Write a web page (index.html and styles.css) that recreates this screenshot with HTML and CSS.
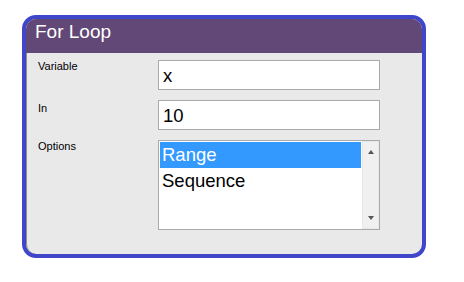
FILE: index.html
```html
<!DOCTYPE html>
<html>
<head>
<meta charset="utf-8">
<link rel="stylesheet" href="styles.css">
</head>
<body>
<div class="window">
  <div class="titlebar">For Loop</div>
  <div class="content">
    <div class="label">Variable</div>
    <div class="field">x</div>
    <div class="label label-in">In</div>
    <div class="field">10</div>
    <div class="label">Options</div>
    <div class="listbox">
      <div class="items">
        <div class="item selected">Range</div>
        <div class="item">Sequence</div>
      </div>
      <div class="scrollbar">
        <span class="arrow up"></span>
        <span class="arrow down"></span>
      </div>
    </div>
  </div>
</div>
</body>
</html>
```
FILE: styles.css
```css
html, body {
  margin: 0;
  padding: 0;
  background: #ffffff;
}
body {
  padding: 15px 0 0 22px;
  font-family: "Liberation Sans", Arial, sans-serif;
}
.window {
  position: relative;
  width: 396px;
  height: 235px;
  border: 4px solid #3f46c9;
  border-radius: 14px;
  background: #e9e9e9;
  display: flex;
  flex-direction: column;
}
.window::before {
  content: "";
  position: absolute;
  top: -4px;
  bottom: -4px;
  left: -1px;
  right: 0;
  border-left: 2px solid #707070;
  background: #d6d6d6;
  z-index: -1;
}
.titlebar {
  height: 34px;
  box-sizing: border-box;
  background: #614876;
  color: #ffffff;
  font-size: 19px;
  line-height: 22px;
  padding: 2px 0 0 9px;
  border-radius: 10px 10px 0 0;
}
.content {
  flex: 1;
  border-left: 1px solid #8c8c8c;
  border-bottom-left-radius: 10px;
  display: grid;
  grid-template-columns: 131px 222px;
  grid-auto-rows: auto;
  row-gap: 10px;
  padding: 7px 0 0 0;
  align-content: start;
}
.label {
  font-size: 11px;
  line-height: 13px;
  color: #000;
  padding: 0 0 0 11px;
}
.label-in {
  padding-top: 2px;
}
.field {
  height: 30px;
  box-sizing: border-box;
  border: 1px solid #aaaaaa;
  background: #ffffff;
  font-size: 18.5px;
  line-height: 26px;
  padding: 2px 4px 0 4px;
  color: #000;
}
.listbox {
  height: 90px;
  box-sizing: border-box;
  border: 1px solid #aaaaaa;
  background: #ffffff;
  display: flex;
}
.items {
  flex: 1;
  padding: 1px 1px 0 1px;
}
.item {
  height: 26px;
  font-size: 18.5px;
  line-height: 26px;
  padding-left: 2px;
  color: #000;
}
.item.selected {
  background: #3399ff;
  color: #ffffff;
}
.scrollbar {
  width: 17px;
  box-sizing: border-box;
  background: #f0f0f0;
  border: 1px solid #e8e8e8;
  display: flex;
  flex-direction: column;
  justify-content: space-between;
  align-items: center;
  padding: 8px 0 8px 0;
}
.arrow {
  width: 0;
  height: 0;
  border-left: 3.5px solid transparent;
  border-right: 3.5px solid transparent;
}
.arrow.up {
  border-bottom: 4px solid #555555;
}
.arrow.down {
  border-top: 4px solid #555555;
}
```
